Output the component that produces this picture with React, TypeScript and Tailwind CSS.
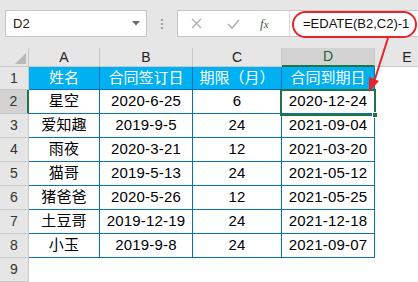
import React from "react";

const cols = [71, 93, 89, 93];
const wCls = ["w-[71px]", "w-[93px]", "w-[89px]", "w-[93px]"];

const data: string[][] = [
  ["星空", "2020-6-25", "6", "2020-12-24"],
  ["爱知趣", "2019-9-5", "24", "2021-09-04"],
  ["雨夜", "2020-3-21", "12", "2021-03-20"],
  ["猫哥", "2019-5-13", "24", "2021-05-12"],
  ["猪爸爸", "2020-5-26", "12", "2021-05-25"],
  ["土豆哥", "2019-12-19", "24", "2021-12-18"],
  ["小玉", "2019-9-8", "24", "2021-09-07"],
];

const cjk = "font-['Liberation_Sans','Noto_Sans_CJK_SC',sans-serif]";

function RowHeader({ n, selected }: { n: number; selected?: boolean }) {
  return (
    <div
      className={
        "w-[29px] shrink-0 flex items-center justify-center text-[14px] text-[#333] border-b border-[#c8c8c8] " +
        (selected
          ? "bg-[#d2d2d2] border-r-2 border-r-[#217346]"
          : "bg-[#e6e6e6] border-r border-r-[#c8c8c8]")
      }
    >
      {n}
    </div>
  );
}

export default function App() {
  return (
    <div className={"relative w-[418px] h-[282px] overflow-hidden bg-white " + cjk}>
      {/* toolbar */}
      <div className="h-[48px] bg-[#e6e6e6] flex items-start pt-[10px]">
        <div className="ml-[5px] w-[142px] h-[27px] bg-white border border-[#c6c6c6] flex items-center pl-[7px] pr-[6px] shrink-0">
          <span className="text-[13px] text-[#222] flex-1">D2</span>
          <svg width="8" height="5" viewBox="0 0 8 5">
            <path d="M0 0 L8 0 L4 4.5 Z" fill="#6b6b6b" />
          </svg>
        </div>
        <div className="w-[30px] h-[27px] flex flex-col items-center justify-center gap-[2px] shrink-0">
          <div className="w-[2px] h-[2px] bg-[#a0a0a0]" />
          <div className="w-[2px] h-[2px] bg-[#a0a0a0]" />
          <div className="w-[2px] h-[2px] bg-[#a0a0a0]" />
        </div>
        <div className="w-[260px] h-[27px] bg-white border border-[#c6c6c6] flex items-center shrink-0">
          <div className="w-[112px] h-full flex items-center shrink-0 border-r border-[#dadada]">
            <svg className="ml-[13px]" width="11" height="11" viewBox="0 0 11 11">
              <path d="M1 1 L10 10 M10 1 L1 10" stroke="#b0b0b0" strokeWidth="1.4" />
            </svg>
            <svg className="ml-[25px]" width="13" height="10" viewBox="0 0 13 10">
              <path d="M1 5 L5 9 L12 1" stroke="#b0b0b0" strokeWidth="1.6" fill="none" />
            </svg>
            <span className="ml-[20px] text-[13px] italic text-[#555] font-['Liberation_Serif',serif]">
              f<span className="text-[11px]">x</span>
            </span>
          </div>
          <div className="pl-[13px] text-[13px] text-[#111] whitespace-nowrap">=EDATE(B2,C2)-1</div>
        </div>
      </div>

      {/* column header row */}
      <div className="flex h-[19px]">
        <div className="w-[29px] shrink-0 bg-[#e6e6e6] border-r border-b border-[#c8c8c8] relative">
          <svg className="absolute right-[2px] bottom-[2px]" width="11" height="11" viewBox="0 0 11 11">
            <path d="M11 0 L11 11 L0 11 Z" fill="#b8b8b8" />
          </svg>
        </div>
        {["A", "B", "C", "D"].map((c, i) => (
          <div
            key={c}
            className={
              wCls[i] +
              " shrink-0 flex items-center justify-center text-[14px] border-r border-[#c8c8c8] " +
              (c === "D"
                ? "bg-[#d2d2d2] border-b-2 border-b-[#217346] text-[#1e5c38]"
                : "bg-[#e6e6e6] border-b border-b-[#c8c8c8] text-[#222]")
            }
          >
            {c}
          </div>
        ))}
        <div className="w-[64px] shrink-0 flex items-center justify-center text-[14px] text-[#222] bg-[#e6e6e6] border-b border-[#c8c8c8]">
          E
        </div>
      </div>

      {/* row 1: header */}
      <div className="flex h-[23px]">
        <RowHeader n={1} />
        {["姓名", "合同签订日", "期限（月）", "合同到期日"].map((t, i) => (
          <div
            key={t}
            className={
              wCls[i] +
              " shrink-0 bg-[#00b0f0] text-white text-[15px] flex items-center justify-center border-r border-b border-[#0a6fc2]"
            }
          >
            {t}
          </div>
        ))}
      </div>

      {data.map((r, ri) => (
        <div key={ri} className="flex h-[24px]">
          <RowHeader n={ri + 2} selected={ri === 0} />
          {r.map((t, i) => (
            <div
              key={i}
              className={
                wCls[i] +
                " shrink-0 text-[15px] text-black flex items-center justify-center border-r border-b border-[#0a6fc2] tracking-[0.2px]"
              }
            >
              {t}
            </div>
          ))}
        </div>
      ))}

      <div className="flex h-[24px]">
        <RowHeader n={9} />
      </div>

      {/* selected cell */}
      <div className="absolute left-[280px] top-[89px] w-[96px] h-[27px] border-2 border-[#217346]" />
      <div className="absolute left-[372px] top-[112px] w-[6px] h-[6px] bg-[#217346] border border-white" />

      {/* red annotation */}
      <div className="absolute left-[292px] top-[11px] w-[125px] h-[27px] border-2 border-[#e8242b] rounded-full" />
      <svg className="absolute left-[360px] top-[36px]" width="36" height="60" viewBox="0 0 36 60">
        <path d="M28 2 L14 46" stroke="#e8242b" strokeWidth="2" />
        <path d="M9 56 L9 41 L19 45 Z" fill="#e8242b" />
      </svg>
    </div>
  );
}
